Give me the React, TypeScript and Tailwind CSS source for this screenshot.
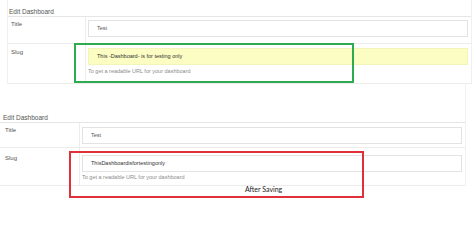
import React from "react";

const font = { fontFamily: '"Liberation Sans", Arial, sans-serif' };

export default function App() {
  return (
    <div className="relative w-[474px] h-[220px] bg-white overflow-hidden" style={font}>
      {/* Top panel */}
      <div className="ml-[7px] w-[465px] border-x border-[#f0f0f0]">
        <div className="h-[17px] border-b border-[#e6e6e6] flex items-end pl-[1px]">
          <span className="text-[6.5px] leading-[9px] text-[#555]">Edit Dashboard</span>
        </div>
        <div className="flex h-[27px] border-b border-[#ececec]">
          <div className="w-[78px] border-r border-[#ececec] pl-[3px] pt-[3px] text-[6px] leading-[8px] text-[#555]">Title</div>
          <div className="flex-1 pl-[2px] pr-[3px] pt-[3px]">
            <div className="h-[17px] border border-[#e3e3e3] bg-white flex items-center pl-[8px] text-[5.5px] text-[#555]">Test</div>
          </div>
        </div>
        <div className="flex h-[40px] border-b border-[#ececec]">
          <div className="w-[78px] border-r border-[#ececec] pl-[3px] pt-[4px] text-[6px] leading-[8px] text-[#555]">Slug</div>
          <div className="flex-1 pl-[2px] pr-[3px] pt-[4px]">
            <div className="h-[17px] bg-[#fbfdc2] border border-[#f3f5b8] flex items-center pl-[8px] text-[5.5px] text-[#333]">This -Dashboard- is for testing only</div>
            <div className="mt-[2px] text-[5.5px] leading-[8px] text-[#8c8c8c]">To get a readable URL for your dashboard</div>
          </div>
        </div>
      </div>

      {/* Bottom panel */}
      <div className="w-[466px] border-r border-[#f0f0f0]">
        <div className="h-[39px] border-b border-[#e6e6e6] flex items-end pl-[3px]">
          <span className="text-[6.5px] leading-[9px] text-[#555]">Edit Dashboard</span>
        </div>
        <div className="flex h-[25px] border-b border-[#ececec]">
          <div className="w-[80px] border-r border-[#ececec] pl-[5px] pt-[3px] text-[6px] leading-[8px] text-[#555]">Title</div>
          <div className="flex-1 pl-[2px] pr-[3px] pt-[4px]">
            <div className="h-[17px] border border-[#e3e3e3] bg-white flex items-center pl-[8px] text-[5.5px] text-[#555]">Test</div>
          </div>
        </div>
        <div className="flex h-[38px] border-b border-[#ececec]">
          <div className="w-[80px] border-r border-[#ececec] pl-[5px] pt-[6px] text-[6px] leading-[8px] text-[#555]">Slug</div>
          <div className="flex-1 pl-[2px] pr-[3px] pt-[7px]">
            <div className="h-[17px] border border-[#e3e3e3] bg-white flex items-center pl-[8px] text-[5.5px] text-[#333]">ThisDashboardisfortestingonly</div>
            <div className="mt-[1px] text-[5.5px] leading-[8px] text-[#8c8c8c]">To get a readable URL for your dashboard</div>
          </div>
        </div>
      </div>

      {/* Annotations */}
      <div className="absolute left-[74px] top-[43px] w-[280px] h-[40px] border-2 border-[#2eaa50]" />
      <div className="absolute left-[69px] top-[151px] w-[295px] h-[47px] border-2 border-[#e0313b]" />
      <div
        className="absolute left-[245px] top-[185px] text-[7px] leading-[8px] text-[#222]"
        style={{ fontFamily: 'Lato, "Open Sans", sans-serif' }}
      >
        After Saving
      </div>
    </div>
  );
}
